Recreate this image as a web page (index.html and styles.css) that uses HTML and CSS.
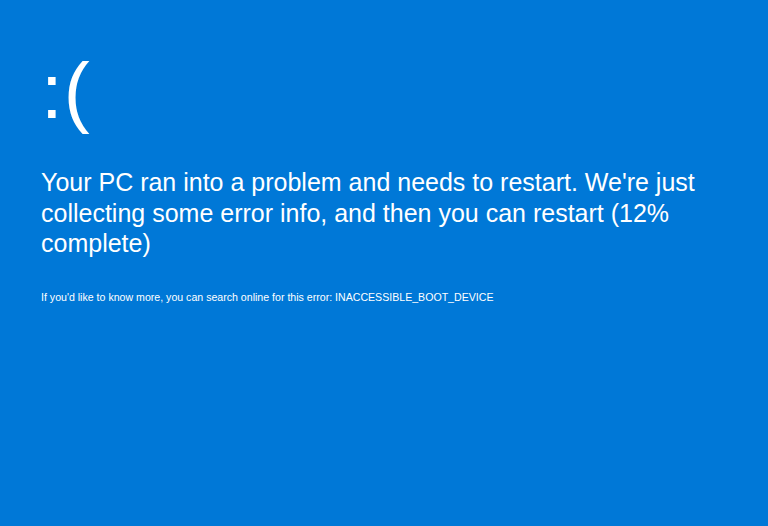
FILE: index.html
```html
<!DOCTYPE html>
<html lang="en">
<head>
  <meta charset="UTF-8" />
  <title>Blue Screen</title>
  <link rel="stylesheet" href="styles.css">
</head>
<body>
  <div class="screen">
    <div class="face">:(</div>
    <p class="message">Your PC ran into a problem and needs to restart. We're just collecting some error info, and then you can restart (12% complete)</p>
    <p class="info">If you'd like to know more, you can search online for this error: INACCESSIBLE_BOOT_DEVICE</p>
  </div>
</body>
</html>
```

FILE: styles.css
```css
* {
  margin: 0;
  padding: 0;
  box-sizing: border-box;
  font-family: 'Liberation Sans', Arial, sans-serif;
}

body {
  background: #0078d7;
  color: #fff;
  height: 526px;
  overflow: hidden;
}

.screen {
  padding: 52px 0 0 41px;
}

.face {
  font-size: 78px;
  line-height: 1;
  letter-spacing: 1px;
  font-weight: 300;
}

.message {
  margin-top: 37px;
  max-width: 700px;
  font-size: 25px;
  line-height: 30.5px;
}

.info {
  margin-top: 32px;
  font-size: 10.6px;
}
```
